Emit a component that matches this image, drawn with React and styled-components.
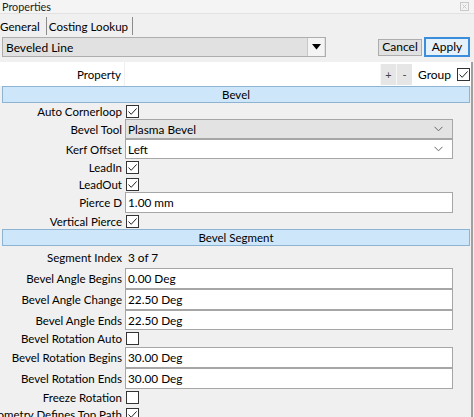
import React from 'react';
import styled, { createGlobalStyle, css } from 'styled-components';

const GlobalStyle = createGlobalStyle`
  html, body {
    margin: 0;
    padding: 0;
    background: #f0f0f0;
  }
  body {
    font-family: Lato, "Noto Sans", sans-serif;
    font-size: 11.5px;
    color: #000;
  }
`;

const StyledPanel = styled.div`
  width: 474px;
  height: 417px;
  overflow: hidden;
  background: #f0f0f0;
  display: flex;
  flex-direction: column;
  & > * {
    flex-shrink: 0;
  }
`;

const StyledTitleBar = styled.div`
  height: 13px;
  display: flex;
  align-items: center;
  justify-content: space-between;
  padding: 0 5px 0 2px;
  background: #f4f4f4;
  border-bottom: 1px solid #e2e2e2;
  font-size: 10.8px;
  line-height: 13px;
  color: #222;
`;

const StyledTabRow = styled.div`
  height: 21px;
  display: flex;
  align-items: stretch;
  padding-top: 1px;
`;

const StyledTab = styled.div`
  display: flex;
  align-items: center;
  padding: 0 4px 0 2px;
  font-size: 11.6px;
  margin-top: 2px;
  ${props => props.active && css`
    margin-left: -2px;
    padding-right: 6px;
  `}
  ${props => !props.active && css`
    border-left: 1px solid #8c8c8c;
    border-right: 1px solid #8c8c8c;
    margin-bottom: 1px;
  `}
`;

const StyledToolRow = styled.div`
  height: 22px;
  display: flex;
  align-items: center;
  padding: 0 4px 0 2px;
`;

const StyledCombo = styled.div`
  width: 324px;
  height: 20px;
  box-sizing: border-box;
  border: 1px solid #adadad;
  background: #e1e1e1;
  display: flex;
  align-items: center;
  justify-content: space-between;
  padding-left: 3px;
  font-size: 12px;
`;

const StyledDropButton = styled.div`
  width: 17px;
  height: 18px;
  box-sizing: border-box;
  border-left: 1px solid #c8c8c8;
  background: #f4f4f4;
  display: flex;
  align-items: center;
  justify-content: center;
  margin-right: 1px;
`;

const StyledButtons = styled.div`
  margin-left: auto;
  display: flex;
  align-items: center;
  gap: 2px;
`;

const StyledButton = styled.button`
  width: 44px;
  height: 17px;
  padding: 0;
  box-sizing: border-box;
  font-family: inherit;
  font-size: 12px;
  line-height: 14px;
  color: #000;
  background: #e1e1e1;
  border: 1px solid #adadad;
  ${props => props.primary && css`
    width: 46px;
    height: 20px;
    border: 2px solid #3c8edc;
    background: #e5f1fb;
  `}
`;

const StyledGrid = styled.div`
  margin-top: 4px;
  width: 473px;
  box-sizing: border-box;
  border-right: 2px solid #a0a0a0;
  flex: 1;
`;

const StyledGridHead = styled.div`
  height: 24px;
  display: flex;
  align-items: center;
  background: #fff;
`;

const StyledLabel = styled.div`
  width: 125px;
  flex: 0 0 125px;
  box-sizing: border-box;
  padding-right: 3px;
  display: flex;
  justify-content: flex-end;
  white-space: nowrap;
  overflow: hidden;
  ${props => props.divider && css`
    align-self: stretch;
    align-items: center;
    border-right: 1px solid #f0f0f0;
  `}
`;

const StyledHeadTools = styled.div`
  margin-left: auto;
  display: flex;
  align-items: center;
  height: 100%;
  padding-right: 1px;
`;

const StyledSmallButton = styled.div`
  width: 15px;
  height: 21px;
  background: #e6e6e6;
  border-left: 1px solid #f6f6f6;
  display: flex;
  align-items: center;
  justify-content: center;
  font-size: 11px;
  color: #444;
`;

const StyledGroupLabel = styled.span`
  margin: 0 5px 0 6px;
  font-size: 12px;
`;

const StyledSection = styled.div`
  height: 15px;
  margin: 0 1px 0 2px;
  background: #cde6f9;
  border: 1px solid #8db3d3;
  display: flex;
  align-items: center;
  justify-content: center;
  font-size: 11.5px;
  line-height: 14px;
`;

const StyledRow = styled.div`
  display: flex;
  align-items: center;
  height: ${props => props.h}px;
`;

const StyledValue = styled.div`
  width: 328px;
  display: flex;
  align-items: center;
  height: 100%;
`;

const StyledBox = styled.div`
  width: 100%;
  height: 100%;
  box-sizing: border-box;
  border: 1px solid #a6a6a6;
  background: ${props => (props.disabled ? '#e3e3e3' : '#fff')};
  display: flex;
  align-items: center;
  justify-content: space-between;
  padding: 0 9px 0 2px;
  font-size: 11.8px;
`;

const StyledCheck = styled.div`
  width: 13px;
  height: 13px;
  margin-left: 1px;
  box-sizing: border-box;
  border: 1px solid #333;
  background: #fff;
  display: flex;
  align-items: center;
  justify-content: center;
`;

const StyledText = styled.span`
  padding-left: 3px;
  font-size: 11.8px;
`;

const Tick = () => (
  <svg width="11" height="11" viewBox="0 0 11 11">
    <path d="M1.5 5.5 L4.2 8.3 L9.6 2.4" fill="none" stroke="#222" strokeWidth="1" />
  </svg>
);

const Chevron = () => (
  <svg width="9" height="6" viewBox="0 0 9 6">
    <path d="M0.5 0.8 L4.5 4.8 L8.5 0.8" fill="none" stroke="#666" strokeWidth="1" />
  </svg>
);

const Checkbox = ({ checked }) => <StyledCheck>{checked && <Tick />}</StyledCheck>;

const bevelRows = [
  { label: 'Auto Cornerloop', type: 'check', checked: true, h: 16 },
  { label: 'Bevel Tool', type: 'combo', value: 'Plasma Bevel', disabled: true, h: 20 },
  { label: 'Kerf Offset', type: 'combo', value: 'Left', h: 20 },
  { label: 'LeadIn', type: 'check', checked: true, h: 17 },
  { label: 'LeadOut', type: 'check', checked: true, h: 16 },
  { label: 'Pierce D', type: 'input', value: '1.00 mm', h: 21 },
  { label: 'Vertical Pierce', type: 'check', checked: true, h: 16 },
];

const segmentRows = [
  { label: 'Segment Index', type: 'text', value: '3 of 7', h: 22 },
  { label: 'Bevel Angle Begins', type: 'input', value: '0.00 Deg', h: 21 },
  { label: 'Bevel Angle Change', type: 'input', value: '22.50 Deg', h: 21 },
  { label: 'Bevel Angle Ends', type: 'input', value: '22.50 Deg', h: 20 },
  { label: 'Bevel Rotation Auto', type: 'check', checked: false, h: 17 },
  { label: 'Bevel Rotation Begins', type: 'input', value: '30.00 Deg', h: 21 },
  { label: 'Bevel Rotation Ends', type: 'input', value: '30.00 Deg', h: 21 },
  { label: 'Freeze Rotation', type: 'check', checked: false, h: 17 },
  { label: 'Geometry Defines Top Path', type: 'check', checked: true, h: 17 },
];

const renderValue = ({ type, value, checked, disabled }) => {
  if (type === 'check') return <Checkbox checked={checked} />;
  if (type === 'text') return <StyledText>{value}</StyledText>;
  return (
    <StyledBox disabled={disabled}>
      {value}
      {type === 'combo' && <Chevron />}
    </StyledBox>
  );
};

const PropertyRows = ({ rows }) =>
  rows.map(row => (
    <StyledRow key={row.label} h={row.h}>
      <StyledLabel>{row.label}</StyledLabel>
      <StyledValue>{renderValue(row)}</StyledValue>
    </StyledRow>
  ));

const App = () => {
  return (
    <StyledPanel>
      <GlobalStyle />
      <StyledTitleBar>
        <span>Properties</span>
        <svg width="9" height="9" viewBox="0 0 9 9">
          <rect x="0.5" y="0.5" width="8" height="8" fill="none" stroke="#c8c8c8" />
          <path d="M2.5 2.5 L6.5 6.5 M6.5 2.5 L2.5 6.5" stroke="#c8c8c8" />
        </svg>
      </StyledTitleBar>
      <StyledTabRow>
        <StyledTab active>General</StyledTab>
        <StyledTab>Costing Lookup</StyledTab>
      </StyledTabRow>
      <StyledToolRow>
        <StyledCombo>
          Beveled Line
          <StyledDropButton>
            <svg width="9" height="6" viewBox="0 0 9 6">
              <path d="M0 0 L9 0 L4.5 5.5 Z" fill="#000" />
            </svg>
          </StyledDropButton>
        </StyledCombo>
        <StyledButtons>
          <StyledButton>Cancel</StyledButton>
          <StyledButton primary>Apply</StyledButton>
        </StyledButtons>
      </StyledToolRow>
      <StyledGrid>
        <StyledGridHead>
          <StyledLabel divider>Property</StyledLabel>
          <StyledHeadTools>
            <StyledSmallButton>+</StyledSmallButton>
            <StyledSmallButton>-</StyledSmallButton>
            <StyledGroupLabel>Group</StyledGroupLabel>
            <Checkbox checked />
          </StyledHeadTools>
        </StyledGridHead>
        <StyledSection>Bevel</StyledSection>
        <PropertyRows rows={bevelRows} />
        <StyledSection>Bevel Segment</StyledSection>
        <PropertyRows rows={segmentRows} />
      </StyledGrid>
    </StyledPanel>
  );
};

export default App;
